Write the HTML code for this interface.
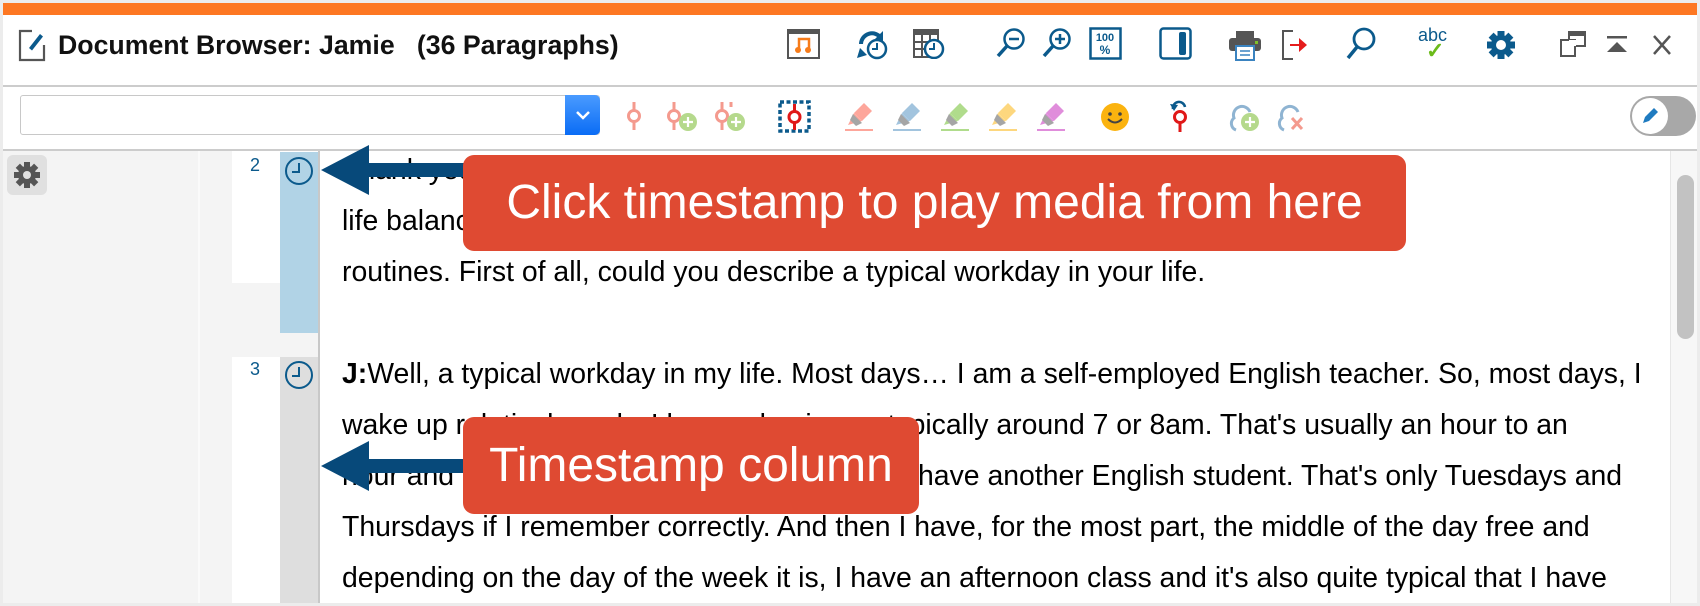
<!DOCTYPE html>
<html><head><meta charset="utf-8"><style>
*{margin:0;padding:0;box-sizing:border-box}
body{width:1700px;height:606px;overflow:hidden;background:#ececec;font-family:"Liberation Sans",Arial,sans-serif;position:relative}
.a{position:absolute}
.txt{position:absolute;left:342px;font-size:28.4px;color:#000;white-space:nowrap;line-height:28px}
</style></head><body>
<div class="a" style="left:3px;top:3px;width:1694px;height:600px;background:#fff"></div>
<div class="a" style="left:3px;top:3px;width:1694px;height:12px;background:#fd7722"></div>
<svg class="a" style="left:18px;top:29px" width="28" height="33" viewBox="0 0 28 33"><path d="M14 2H2v29h24V16" fill="none" stroke="#555" stroke-width="2.2"/><path d="M11 19l11-14 3 2.5-11 14z" fill="#0b5a8c"/></svg>
<div class="a" style="left:58px;top:30px;font-size:26.7px;font-weight:bold;color:#111;white-space:nowrap">Document Browser: Jamie&nbsp;&nbsp;&nbsp;(36 Paragraphs)</div>
<svg class="a" style="left:787px;top:29px" width="33" height="30"><rect x="1" y="1" width="31" height="28" fill="none" stroke="#555" stroke-width="2"/><rect x="1" y="1" width="31" height="4" fill="#555"/><path d="M12 21V10h10v11" fill="none" stroke="#f77c1a" stroke-width="2.5"/><circle cx="11" cy="21" r="3" fill="#f77c1a"/><circle cx="21" cy="21" r="3" fill="#f77c1a"/></svg>
<svg class="a" style="left:856px;top:28px" width="34" height="32"><path d="M5 16a11 11 0 0 1 20-6" fill="none" stroke="#0b5a8c" stroke-width="4"/><path d="M27 3v10h-10z" fill="#0b5a8c"/><path d="M1 30l3-10 7 7z" fill="#0b5a8c"/><circle cx="21" cy="21" r="9" fill="#fff" stroke="#0b5a8c" stroke-width="2.5"/><path d="M21 15v6h-5" fill="none" stroke="#0b5a8c" stroke-width="2"/></svg>
<svg class="a" style="left:913px;top:29px" width="32" height="30"><rect x="1" y="1" width="24" height="27" fill="none" stroke="#555" stroke-width="2"/><rect x="1" y="1" width="24" height="5" fill="#555"/><path d="M1 13h24M1 20h24M9 1v27M17 1v27" stroke="#555" stroke-width="2"/><circle cx="21" cy="20" r="9" fill="#fff" stroke="#0b5a8c" stroke-width="2.5"/><path d="M21 14v6h-5" fill="none" stroke="#0b5a8c" stroke-width="2"/></svg>
<svg class="a" style="left:996px;top:27px" width="30" height="32"><circle cx="18" cy="12" r="9.5" fill="none" stroke="#0b5a8c" stroke-width="2.5"/><path d="M11 19L2 29" stroke="#0b5a8c" stroke-width="3.5"/><path d="M13 12h10" stroke="#0b5a8c" stroke-width="2.5"/></svg>
<svg class="a" style="left:1042px;top:27px" width="30" height="32"><circle cx="18" cy="12" r="9.5" fill="none" stroke="#0b5a8c" stroke-width="2.5"/><path d="M11 19L2 29" stroke="#0b5a8c" stroke-width="3.5"/><path d="M13 12h10M18 7v10" stroke="#0b5a8c" stroke-width="2.5"/></svg>
<svg class="a" style="left:1089px;top:27px" width="33" height="33"><rect x="1.5" y="1.5" width="30" height="30" fill="none" stroke="#0b5a8c" stroke-width="2.5"/><text x="16" y="14" font-size="11" font-weight="bold" text-anchor="middle" fill="#0b5a8c" font-family="Liberation Sans">100</text><text x="16" y="27" font-size="12" font-weight="bold" text-anchor="middle" fill="#0b5a8c" font-family="Liberation Sans">%</text></svg>
<svg class="a" style="left:1159px;top:27px" width="33" height="33"><rect x="1.5" y="1.5" width="30" height="30" rx="3" fill="none" stroke="#0b5a8c" stroke-width="2.5"/><rect x="20" y="5" width="7" height="23" rx="2" fill="#0b5a8c"/></svg>
<svg class="a" style="left:1228px;top:29px" width="34" height="32"><rect x="8" y="2" width="18" height="8" fill="#555"/><rect x="1" y="9" width="32" height="13" rx="3" fill="#555"/><rect x="27" y="12" width="3" height="3" fill="#7fc12b"/><rect x="8" y="17" width="18" height="14" fill="#fff" stroke="#3a83c0" stroke-width="2"/><path d="M12 22h10M12 26h10" stroke="#3a83c0" stroke-width="1.5"/></svg>
<svg class="a" style="left:1281px;top:29px" width="28" height="32"><path d="M12 2H2v28h10" fill="none" stroke="#555" stroke-width="2"/><path d="M9 15h9v-6l8 7-8 7v-6H9z" fill="#e51c1c"/></svg>
<svg class="a" style="left:1345px;top:26px" width="32" height="34"><circle cx="19" cy="13" r="10" fill="none" stroke="#0b5a8c" stroke-width="2.8"/><path d="M12 21L3 32" stroke="#0b5a8c" stroke-width="3.5"/></svg>
<div class="a" style="left:1418px;top:25px;font-size:18px;color:#0b5a8c">abc</div>
<div class="a" style="left:1426px;top:38px;font-size:22px;color:#6bbb1a;font-weight:bold">✓</div>
<svg class="a" style="left:1486px;top:30px" width="30" height="30" viewBox="-15 -15 30 30"><g fill="#0b5a8c"><circle r="10"/><rect x="-3.5" y="-14" width="7" height="28"/><rect x="-3.5" y="-14" width="7" height="28" transform="rotate(45)"/><rect x="-3.5" y="-14" width="7" height="28" transform="rotate(90)"/><rect x="-3.5" y="-14" width="7" height="28" transform="rotate(135)"/></g><circle r="5" fill="#fff"/></svg>
<svg class="a" style="left:1560px;top:31px" width="26" height="26"><rect x="9" y="1" width="16" height="14" fill="#fff" stroke="#555" stroke-width="2"/><rect x="9" y="1" width="16" height="4" fill="#555"/><rect x="1" y="9" width="14" height="16" fill="#fff" stroke="#555" stroke-width="2"/><rect x="9" y="9" width="7" height="6" fill="#fff"/></svg>
<svg class="a" style="left:1606px;top:35px" width="22" height="20"><rect x="1" y="1" width="20" height="2.5" fill="#555"/><path d="M1 17L11 7l10 10z" fill="#555"/></svg>
<svg class="a" style="left:1652px;top:34px" width="20" height="22"><path d="M2 2l16 18M18 2L2 20" stroke="#555" stroke-width="2.5"/></svg>
<div class="a" style="left:3px;top:85px;width:1694px;height:2px;background:#ccc"></div>
<div class="a" style="left:20px;top:95px;width:580px;height:40px;border:1.5px solid #c8c8c8;border-radius:3px;background:#fff"></div>
<div class="a" style="left:565px;top:95px;width:35px;height:40px;border-radius:0 5px 5px 0;background:linear-gradient(#4a9bff,#0a6cf5)"></div>
<svg class="a" style="left:574px;top:108px" width="18" height="14"><path d="M3 4l6 6 6-6" fill="none" stroke="#fff" stroke-width="2.5"/></svg>
<svg class="a" style="left:626px;top:101px" width="16" height="30"><path d="M8 1v8M8 21v8" stroke="#f49a8e" stroke-width="3"/><circle cx="8" cy="15" r="5.5" fill="none" stroke="#f49a8e" stroke-width="3"/></svg>
<svg class="a" style="left:666px;top:101px" width="34" height="32"><path d="M8 1v8M8 21v8" stroke="#f49a8e" stroke-width="3"/><circle cx="8" cy="15" r="5.5" fill="none" stroke="#f49a8e" stroke-width="3"/><circle cx="22" cy="21" r="9" fill="#b5d98c"/><path d="M22 16v10M17 21h10" stroke="#fff" stroke-width="2.2"/></svg>
<svg class="a" style="left:714px;top:101px" width="34" height="32"><path d="M8 1v8M8 21v8M17 1v5" stroke="#f49a8e" stroke-width="3"/><circle cx="8" cy="15" r="5.5" fill="none" stroke="#f49a8e" stroke-width="3"/><circle cx="22" cy="21" r="9" fill="#b5d98c"/><path d="M22 16v10M17 21h10" stroke="#fff" stroke-width="2.2"/></svg>
<svg class="a" style="left:778px;top:100px" width="33" height="33"><rect x="2" y="2" width="29" height="29" fill="none" stroke="#0b5a8c" stroke-width="3.5" stroke-dasharray="4 2.5"/><path d="M16.5 4v8M16.5 22v8" stroke="#e01818" stroke-width="3"/><circle cx="16.5" cy="17" r="5.5" fill="none" stroke="#e01818" stroke-width="3"/></svg>
<svg class="a" style="left:845px;top:101px" width="32" height="32"><path d="M3 24l6-12 8 8z" fill="#fda69b"/><path d="M9 12l10-10 8 8-10 10z" fill="#fda69b"/><path d="M8 13l9 9-6 3-6-6z" fill="#a5a5a5"/><rect x="0" y="28" width="28" height="2" fill="#fda69b"/></svg>
<svg class="a" style="left:893px;top:101px" width="32" height="32"><path d="M3 24l6-12 8 8z" fill="#a2c4de"/><path d="M9 12l10-10 8 8-10 10z" fill="#a2c4de"/><path d="M8 13l9 9-6 3-6-6z" fill="#a5a5a5"/><rect x="0" y="28" width="28" height="2" fill="#a2c4de"/></svg>
<svg class="a" style="left:941px;top:101px" width="32" height="32"><path d="M3 24l6-12 8 8z" fill="#b0dc8c"/><path d="M9 12l10-10 8 8-10 10z" fill="#b0dc8c"/><path d="M8 13l9 9-6 3-6-6z" fill="#a5a5a5"/><rect x="0" y="28" width="28" height="2" fill="#b0dc8c"/></svg>
<svg class="a" style="left:989px;top:101px" width="32" height="32"><path d="M3 24l6-12 8 8z" fill="#fdd77e"/><path d="M9 12l10-10 8 8-10 10z" fill="#fdd77e"/><path d="M8 13l9 9-6 3-6-6z" fill="#a5a5a5"/><rect x="0" y="28" width="28" height="2" fill="#fdd77e"/></svg>
<svg class="a" style="left:1037px;top:101px" width="32" height="32"><path d="M3 24l6-12 8 8z" fill="#e08ddb"/><path d="M9 12l10-10 8 8-10 10z" fill="#e08ddb"/><path d="M8 13l9 9-6 3-6-6z" fill="#a5a5a5"/><rect x="0" y="28" width="28" height="2" fill="#e08ddb"/></svg>
<svg class="a" style="left:1100px;top:102px" width="30" height="30"><circle cx="15" cy="15" r="14" fill="#fbb30f"/><circle cx="10" cy="12" r="1.8" fill="#444"/><circle cx="20" cy="12" r="1.8" fill="#444"/><path d="M8 17q7 7 14 0" fill="none" stroke="#444" stroke-width="2"/></svg>
<svg class="a" style="left:1168px;top:100px" width="24" height="34"><path d="M5 9a6 6 0 0 1 12-2" fill="none" stroke="#0b5a8c" stroke-width="2.5"/><path d="M2 4l4 7 4-6z" fill="#0b5a8c"/><circle cx="12" cy="17" r="5.5" fill="none" stroke="#e01818" stroke-width="3"/><path d="M12 22v10" stroke="#e01818" stroke-width="3"/></svg>
<svg class="a" style="left:1228px;top:100px" width="34" height="34"><path d="M8 30a7 7 0 0 1-2-12 8 8 0 0 1 16-6" fill="none" stroke="#8fb4d2" stroke-width="3"/><circle cx="22" cy="22" r="9" fill="#b5d98c"/><path d="M22 17v10M17 22h10" stroke="#fff" stroke-width="2.2"/></svg>
<svg class="a" style="left:1276px;top:100px" width="34" height="34"><path d="M8 30a7 7 0 0 1-2-12 8 8 0 0 1 16-6" fill="none" stroke="#8fb4d2" stroke-width="3"/><path d="M16 18l10 11M26 18L16 29" stroke="#f49a8e" stroke-width="3"/></svg>
<div class="a" style="left:1630px;top:96px;width:66px;height:40px;border-radius:20px;background:#a8a8a8"></div>
<div class="a" style="left:1632px;top:98px;width:36px;height:36px;border-radius:50%;background:#fff"></div>
<svg class="a" style="left:1640px;top:106px" width="20" height="20"><path d="M3 17l2-6 9-9 4 4-9 9z" fill="#1f7bc0"/></svg>
<div class="a" style="left:3px;top:149px;width:1694px;height:2px;background:#ccc"></div>
<div class="a" style="left:3px;top:151px;width:195px;height:452px;background:#f4f4f4"></div>
<div class="a" style="left:198px;top:151px;width:2px;height:452px;background:#fafafa"></div>
<div class="a" style="left:200px;top:151px;width:32px;height:452px;background:#f4f4f4"></div>
<div class="a" style="left:7px;top:155px;width:40px;height:40px;border-radius:6px;background:#e0e0e0"></div>
<svg class="a" style="left:13px;top:161px" width="28" height="28" viewBox="-14 -14 28 28"><g fill="#555"><circle r="9"/><rect x="-3" y="-13" width="6" height="26"/><rect x="-3" y="-13" width="6" height="26" transform="rotate(45)"/><rect x="-3" y="-13" width="6" height="26" transform="rotate(90)"/><rect x="-3" y="-13" width="6" height="26" transform="rotate(135)"/></g><circle r="4" fill="#e0e0e0"/></svg>
<div class="a" style="left:232px;top:151px;width:48px;height:452px;background:#fff"></div>
<div class="a" style="left:232px;top:283px;width:88px;height:74px;background:#f4f4f4"></div>
<div class="a" style="left:280px;top:152px;width:38px;height:181px;background:#b1d3e6"></div>
<div class="a" style="left:280px;top:357px;width:38px;height:246px;background:#dedede"></div>
<div class="a" style="left:318px;top:151px;width:2px;height:452px;background:#c8c8c8"></div>
<div class="a" style="left:250px;top:155px;font-size:18px;color:#0b5a8c">2</div>
<div class="a" style="left:250px;top:359px;font-size:18px;color:#0b5a8c">3</div>
<svg class="a" style="left:284px;top:156px" width="30" height="30"><circle cx="15" cy="15" r="13" fill="none" stroke="#0b5a8c" stroke-width="2"/><path d="M15 7v9h-7" fill="none" stroke="#0b5a8c" stroke-width="2"/></svg>
<svg class="a" style="left:284px;top:360px" width="30" height="30"><circle cx="15" cy="15" r="13" fill="none" stroke="#0b5a8c" stroke-width="2"/><path d="M15 7v9h-7" fill="none" stroke="#0b5a8c" stroke-width="2"/></svg>
<div class="a" style="left:1670px;top:151px;width:27px;height:452px;background:#f7f7f7;border-left:1px solid #e6e6e6"></div>
<div class="a" style="left:1677px;top:175px;width:17px;height:164px;border-radius:9px;background:#c2c2c2"></div>
<div class="txt" style="top:156px">Thank you for agreeing to take part in this interview. We are interested in your work</div>
<div class="txt" style="top:207px">life balance and would like to ask you some questions regarding your daily</div>
<div class="txt" style="top:258px">routines. First of all, could you describe a typical workday in your life.</div>
<div class="txt" style="top:360px"><b>J:</b>Well, a typical workday in my life. Most days… I am a self-employed English teacher. So, most days, I</div>
<div class="txt" style="top:411px">wake up relatively early. I have a business, typically around 7 or 8am. That's usually an hour to an</div>
<div class="txt" style="top:462px">hour and a half of work and then sometimes I have another English student. That's only Tuesdays and</div>
<div class="txt" style="top:513px">Thursdays if I remember correctly. And then I have, for the most part, the middle of the day free and</div>
<div class="txt" style="top:564px">depending on the day of the week it is, I have an afternoon class and it's also quite typical that I have</div>
<svg class="a" style="left:0;top:0" width="1700" height="606"><path d="M321 170l48-25v18h100v14h-100v18z" fill="#07497a"/><path d="M321 466l48-25v18h100v14h-100v18z" fill="#07497a"/></svg>
<div class="a" style="left:463px;top:155px;width:943px;height:96px;border-radius:11px;background:#df4a32;color:#fff;font-size:48px;line-height:96px;text-align:center;white-space:nowrap">Click timestamp to play media from here</div>
<div class="a" style="left:463px;top:417px;width:456px;height:97px;border-radius:11px;background:#df4a32;color:#fff;font-size:48px;line-height:97px;text-align:center;white-space:nowrap">Timestamp column</div>
</body></html>
